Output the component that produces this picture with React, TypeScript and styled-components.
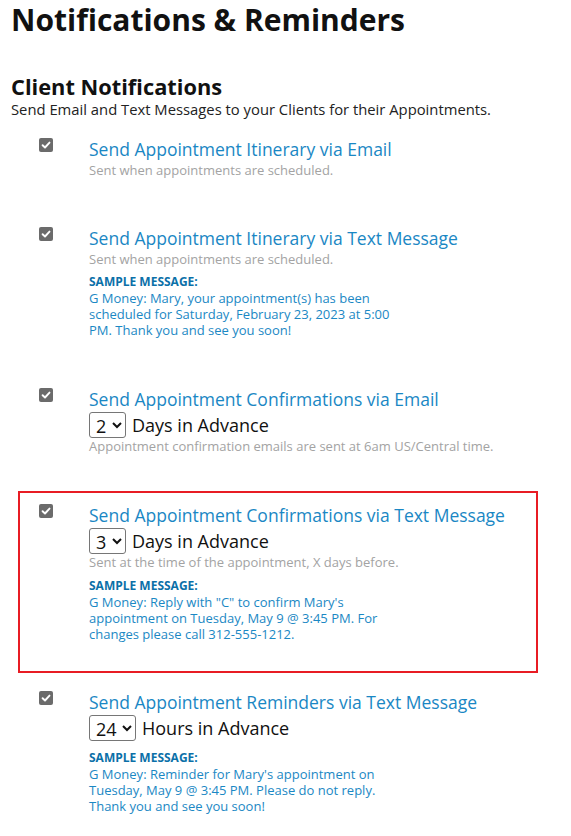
import React from 'react'
import styled, { createGlobalStyle } from 'styled-components'

const GlobalStyle = createGlobalStyle`
  html, body {
    margin: 0;
    padding: 0;
    background: #ffffff;
    font-family: 'Open Sans', 'Liberation Sans', sans-serif;
    color: #111111;
  }
`

type Notice = {
  title: string
  selectValue?: string
  selectOptions?: string[]
  unit?: string
  note?: string
  sample?: string
  highlighted?: boolean
}

const notices: Notice[] = [
  {
    title: 'Send Appointment Itinerary via Email',
    note: 'Sent when appointments are scheduled.',
  },
  {
    title: 'Send Appointment Itinerary via Text Message',
    note: 'Sent when appointments are scheduled.',
    sample:
      'G Money: Mary, your appointment(s) has been scheduled for Saturday, February 23, 2023 at 5:00 PM. Thank you and see you soon!',
  },
  {
    title: 'Send Appointment Confirmations via Email',
    selectValue: '2',
    selectOptions: ['1', '2', '3', '4', '5', '6', '7'],
    unit: 'Days in Advance',
    note: 'Appointment confirmation emails are sent at 6am US/Central time.',
  },
  {
    title: 'Send Appointment Confirmations via Text Message',
    selectValue: '3',
    selectOptions: ['1', '2', '3', '4', '5', '6', '7'],
    unit: 'Days in Advance',
    note: 'Sent at the time of the appointment, X days before.',
    sample:
      'G Money: Reply with "C" to confirm Mary\'s appointment on Tuesday, May 9 @ 3:45 PM. For changes please call 312-555-1212.',
    highlighted: true,
  },
  {
    title: 'Send Appointment Reminders via Text Message',
    selectValue: '24',
    selectOptions: ['2', '4', '12', '24', '48'],
    unit: 'Hours in Advance',
    sample:
      "G Money: Reminder for Mary's appointment on Tuesday, May 9 @ 3:45 PM. Please do not reply. Thank you and see you soon!",
  },
]

export default function App(): React.ReactElement {
  return (
    <Page>
      <GlobalStyle />
      <PageTitle>Notifications &amp; Reminders</PageTitle>
      <SectionTitle>Client Notifications</SectionTitle>
      <SectionIntro>Send Email and Text Messages to your Clients for their Appointments.</SectionIntro>
      <NoticeList>
        {notices.map((n) => (
          <NoticeRow key={n.title} $highlighted={n.highlighted}>
            <CheckBox>
              <svg width='10' height='10' viewBox='0 0 10 10'>
                <path d='M1.6 5.2 L4 7.5 L8.5 2.6' fill='none' stroke='#ffffff' strokeWidth='1.9' strokeLinecap='round' strokeLinejoin='round' />
              </svg>
            </CheckBox>
            <NoticeBody>
              <NoticeTitle>{n.title}</NoticeTitle>
              {n.selectOptions && (
                <AdvanceRow>
                  <AdvanceSelect defaultValue={n.selectValue}>
                    {n.selectOptions.map((o) => (
                      <option key={o} value={o}>{o}</option>
                    ))}
                  </AdvanceSelect>
                  {n.unit}
                </AdvanceRow>
              )}
              {n.note && <NoticeNote>{n.note}</NoticeNote>}
              {n.sample && (
                <Sample $spaced={!!n.note}>
                  <SampleLabel>Sample Message:</SampleLabel>
                  <SampleText>{n.sample}</SampleText>
                </Sample>
              )}
            </NoticeBody>
          </NoticeRow>
        ))}
      </NoticeList>
    </Page>
  )
}

const Page = styled.div`
  padding: 2px 11px 20px;
`

const PageTitle = styled.h1`
  margin: 0;
  font-size: 30px;
  line-height: 36px;
  font-weight: 700;
  color: #111111;
`

const SectionTitle = styled.h2`
  margin: 36px 0 0;
  font-size: 21.8px;
  line-height: 26px;
  font-weight: 700;
  color: #111111;
`

const SectionIntro = styled.p`
  margin: 0;
  font-size: 14.8px;
  line-height: 19px;
  color: #222222;
`

const NoticeList = styled.div`
  display: flex;
  flex-direction: column;
  gap: 5px;
  margin-top: 6px;
  margin-left: 7px;
  width: 520px;
`

const NoticeRow = styled.div<{ $highlighted?: boolean }>`
  display: flex;
  align-items: flex-start;
  padding: 11px 0 29.5px 19px;
  border: 2px solid ${(p) => (p.$highlighted ? '#e81c24' : 'transparent')};
`

const CheckBox = styled.span`
  flex: none;
  display: flex;
  align-items: center;
  justify-content: center;
  width: 14px;
  height: 14px;
  margin-right: 36px;
  border-radius: 2px;
  background: #6b6b6b;
`

const NoticeBody = styled.div`
  display: flex;
  flex-direction: column;
  min-width: 0;
`

const NoticeTitle = styled.div`
  font-size: 17.5px;
  line-height: 23.5px;
  color: #1a87c4;
`

const AdvanceRow = styled.div`
  display: flex;
  align-items: center;
  gap: 6px;
  height: 27px;
  font-size: 18px;
  color: #111111;
`

const AdvanceSelect = styled.select`
  font-family: 'Open Sans', 'Liberation Sans', sans-serif;
  font-size: 18px;
  color: #111111;
  height: 26px;
  padding: 0 2px;
  border: 1px solid #767676;
  border-radius: 3px;
  background: #ffffff;
`

const NoticeNote = styled.div`
  font-size: 13px;
  line-height: 16px;
  color: #a3a3a3;
`

const Sample = styled.div<{ $spaced: boolean }>`
  margin-top: ${(p) => (p.$spaced ? '6.5px' : '7.5px')};
  width: 310px;
`

const SampleLabel = styled.div`
  font-size: 12px;
  line-height: 17px;
  font-weight: 700;
  text-transform: uppercase;
  color: #0b70a8;
`

const SampleText = styled.div`
  font-size: 13px;
  line-height: 16px;
  color: #1b88c4;
`
